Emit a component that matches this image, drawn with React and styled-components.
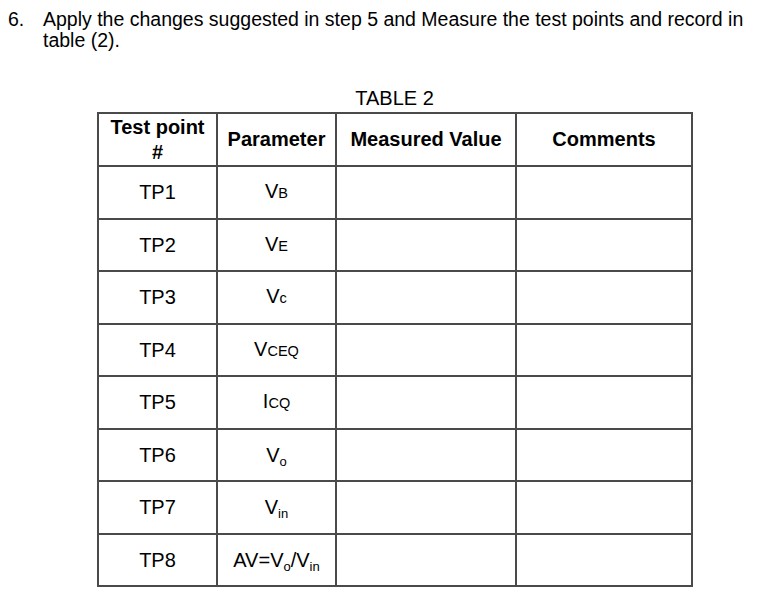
import styled, { createGlobalStyle } from "styled-components";

const GlobalStyle = createGlobalStyle`
  body {
    margin: 0;
    background: #fff;
    color: #000;
    font-family: "Liberation Sans", Arial, sans-serif;
  }
`;

const Page = styled.div`
  width: 762px;
  height: 598px;
  overflow: hidden;
  padding-top: 9px;
  box-sizing: border-box;
`;

const Step = styled.div`
  display: flex;
  font-size: 19.5px;
  line-height: 21px;
  padding-left: 8px;
`;

const StepNumber = styled.span`
  width: 35px;
  flex-shrink: 0;
`;

const StepText = styled.p`
  margin: 0;
  width: 712px;
`;

const Caption = styled.div`
  width: 593px;
  margin: 37px 0 0 98px;
  text-align: center;
  font-size: 20px;
  line-height: 20px;
  height: 20px;
`;

const Table = styled.table`
  margin: 4px 0 0 97px;
  border-collapse: collapse;
  table-layout: fixed;
  width: 594px;
  font-size: 20px;
`;

const HeadCell = styled.th`
  border: 2px solid #4a4a4a;
  height: 53px;
  padding: 0;
  font-weight: 700;
  line-height: 25px;
  text-align: center;
  vertical-align: middle;
  width: ${(p) => p.$w}px;
  box-sizing: border-box;
`;

const Cell = styled.td`
  border: 2px solid #4a4a4a;
  height: 52.5px;
  padding: 0;
  text-align: center;
  vertical-align: middle;
  line-height: 22px;
  box-sizing: border-box;
`;

const Small = styled.span`
  font-size: 14.5px;
`;

const Sub = styled.sub`
  font-size: 13px;
  vertical-align: -4px;
  line-height: 0;
`;

const rows = [
  ["TP1", <>V<Small>B</Small></>],
  ["TP2", <>V<Small>E</Small></>],
  ["TP3", <>V<Small>c</Small></>],
  ["TP4", <>V<Small>CEQ</Small></>],
  ["TP5", <>I<Small>CQ</Small></>],
  ["TP6", <>V<Sub>o</Sub></>],
  ["TP7", <>V<Sub>in</Sub></>],
  ["TP8", <>AV=V<Sub>o</Sub>/V<Sub>in</Sub></>],
];

const App = () => (
  <Page>
    <GlobalStyle />
    <Step>
      <StepNumber>6.</StepNumber>
      <StepText>
        Apply the changes suggested in step 5 and Measure the test points and
        record in table (2).
      </StepText>
    </Step>
    <Caption>TABLE 2</Caption>
    <Table>
      <thead>
        <tr>
          <HeadCell $w={119}>
            Test point
            <br />#
          </HeadCell>
          <HeadCell $w={119}>Parameter</HeadCell>
          <HeadCell $w={180}>Measured Value</HeadCell>
          <HeadCell $w={176}>Comments</HeadCell>
        </tr>
      </thead>
      <tbody>
        {rows.map(([tp, param]) => (
          <tr key={tp}>
            <Cell>{tp}</Cell>
            <Cell>{param}</Cell>
            <Cell />
            <Cell />
          </tr>
        ))}
      </tbody>
    </Table>
  </Page>
);

export default App;
